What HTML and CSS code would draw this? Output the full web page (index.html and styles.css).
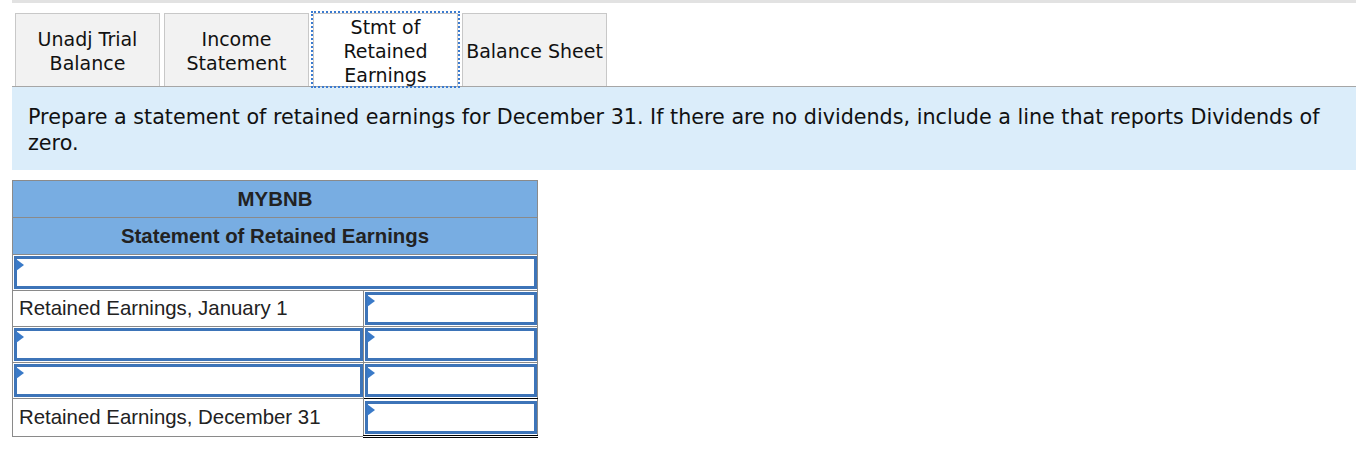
FILE: index.html
```html
<!DOCTYPE html>
<html>
	<head>
		<meta charset="UTF-8">
		<title>Statement of Retained Earnings</title>
		<link rel="stylesheet" href="styles.css">
	</head>
	<body>
		<div class="page">
			<div class="topbar"></div>
			<ul class="tabs">
				<li class="tab">Unadj Trial<br>Balance</li>
				<li class="tab">Income<br>Statement</li>
				<li class="tab active">Stmt of<br>Retained<br>Earnings</li>
				<li class="tab">Balance Sheet</li>
			</ul>
			<div class="prompt">
				Prepare a statement of retained earnings for December 31. If there are no dividends, include a line that reports Dividends of zero.
			</div>
			<table class="stmt">
				<tr><th colspan="2">MYBNB</th></tr>
				<tr><th colspan="2">Statement of Retained Earnings</th></tr>
				<tr>
					<td colspan="2" class="cell"><div class="entry"></div></td>
				</tr>
				<tr>
					<td class="label">Retained Earnings, January 1</td>
					<td class="cell"><div class="entry"></div></td>
				</tr>
				<tr>
					<td class="cell"><div class="entry"></div></td>
					<td class="cell"><div class="entry"></div></td>
				</tr>
				<tr>
					<td class="cell"><div class="entry"></div></td>
					<td class="cell sub"><div class="entry"></div></td>
				</tr>
				<tr>
					<td class="label last">Retained Earnings, December 31</td>
					<td class="cell total"><div class="entry"></div></td>
				</tr>
			</table>
		</div>
	</body>
</html>
```

FILE: styles.css
```css
*{
	margin: 0;
	padding: 0;
}
ul,li{
	list-style-type: none;
}
body{
	font-family: "DejaVu Sans", Verdana, sans-serif;
	color: #111;
}
.page{
	margin: 0 10px 0 12px;
}
.topbar{
	height: 3px;
	background: #e2e2e2;
}
.tabs{
	display: flex;
	gap: 4px;
	padding: 10px 0 0 3px;
}
.tab{
	width: 145px;
	height: 73px;
	box-sizing: border-box;
	border: 1px solid #c8c8c8;
	border-bottom: none;
	background: #f2f2f2;
	display: flex;
	align-items: center;
	justify-content: center;
	text-align: center;
	font-size: 19px;
	line-height: 24px;
	padding-top: 1px;
}
.tab.active{
	background: #fff;
	outline: 2px dotted #3b7bd0;
	outline-offset: 0;
	padding-top: 2px;
}
.prompt{
	background: #dbedfa;
	border-top: 1px solid #a6a6a6;
	padding: 17px 16px 14px;
	font-size: 20.7px;
	line-height: 26px;
}
.stmt{
	margin-top: 10px;
	width: 526px;
	border-collapse: collapse;
	font-family: "Liberation Sans", Arial, sans-serif;
	font-size: 20.4px;
	color: #222;
}
.stmt th{
	background: #78ade2;
	border: 1px solid #8a8a8a;
	height: 36px;
	padding: 0;
	font-weight: bold;
	text-align: center;
}
.stmt td{
	border: 1px solid #8a8a8a;
	padding: 0;
	height: 35px;
}
.stmt td.label{
	width: 344px;
	padding-left: 6px;
	background: #fff;
}
.stmt td.last{
	height: 37px;
}
.stmt td.cell{
	padding: 1px 0 1px 1px;
	height: 33px;
}
.stmt td.sub{
	border-bottom: 1px solid #000;
}
.stmt td.total{
	border-bottom: 3px double #000;
}
.entry{
	position: relative;
	height: 33px;
	box-sizing: border-box;
	border: 3px solid #3d74b8;
	background: #fff;
}
.entry::before{
	content: "";
	position: absolute;
	left: -1px;
	top: 0;
	border-left: 8px solid #3a7ac8;
	border-top: 6px solid transparent;
	border-bottom: 6px solid transparent;
}
```
